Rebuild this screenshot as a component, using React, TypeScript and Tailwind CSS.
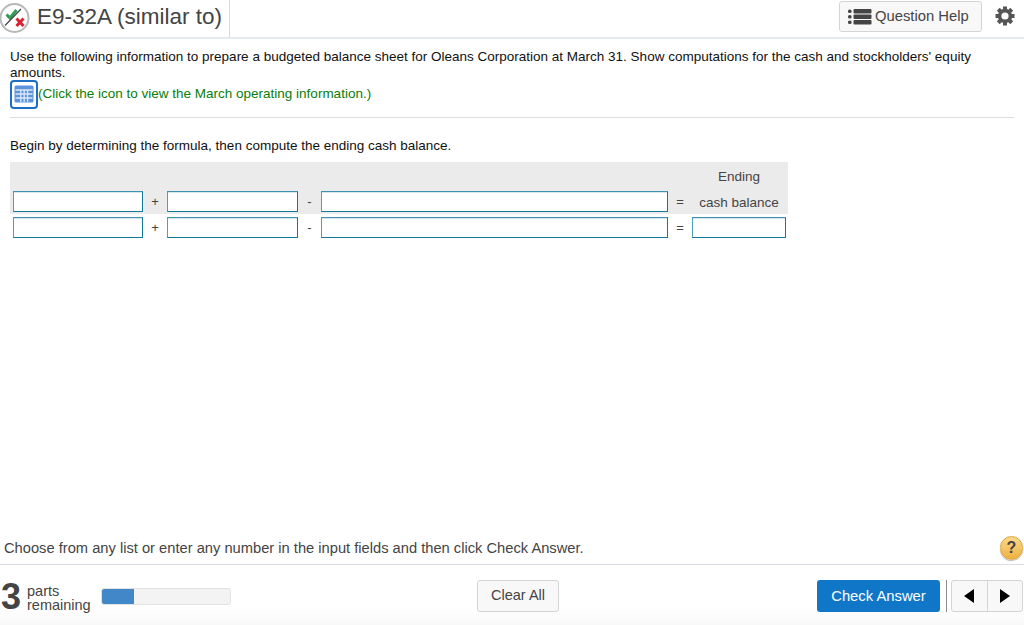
import React from 'react';

const Field = ({ className = '' }: { className?: string }) => (
  <div className={`h-[21px] bg-white border border-[#12799b] border-l-[#4f9fb8] border-t-[#3f93ae] shadow-[inset_0_1px_0_#d5e8ee] ${className}`} />
);

const Op = ({ children }: { children: React.ReactNode }) => (
  <div className="text-[13px] text-[#444] text-center leading-[21px]">{children}</div>
);

const StatusIcon = () => (
  <svg width="32" height="32" viewBox="0 0 32 32">
    <circle cx="15.5" cy="16" r="14" fill="#fff" stroke="#b8b8b8" strokeWidth="2" />
    <path d="M7.5 12.5l3.5 3.5 6.5-8" fill="none" stroke="#2f9e50" strokeWidth="3" />
    <path d="M6 23.5L22 7" stroke="#444" strokeWidth="1.2" />
    <path d="M17.5 16.5l7 7.5M24.5 16.5l-7 7.5" stroke="#d9232e" strokeWidth="3" />
  </svg>
);

const ListIcon = () => (
  <svg width="24" height="16" viewBox="0 0 24 16" fill="#444">
    <rect x="0" y="0.5" width="3.6" height="3.6" rx="1.6" />
    <rect x="0" y="6" width="3.6" height="3.6" rx="1.6" />
    <rect x="0" y="11.5" width="3.6" height="3.6" rx="1.6" />
    <rect x="5.5" y="0" width="18" height="4.6" rx="1" />
    <rect x="5.5" y="5.5" width="18" height="4.6" rx="1" />
    <rect x="5.5" y="11" width="18" height="4.6" rx="1" />
  </svg>
);

const GearIcon = () => (
  <svg width="20" height="20" viewBox="0 0 20 20">
    <g fill="#555">
      <circle cx="10" cy="10" r="7.2" />
      <rect x="8" y="0.5" width="4" height="19" />
      <rect x="8" y="0.5" width="4" height="19" transform="rotate(45 10 10)" />
      <rect x="8" y="0.5" width="4" height="19" transform="rotate(90 10 10)" />
      <rect x="8" y="0.5" width="4" height="19" transform="rotate(135 10 10)" />
    </g>
    <circle cx="10" cy="10" r="3.6" fill="#fff" />
  </svg>
);

const TableIcon = () => (
  <div className="w-[28px] h-[29px] border-[2px] border-[#1c6fc4] rounded-[4px] bg-white flex items-center justify-center">
    <svg width="20" height="18" viewBox="0 0 20 18">
      <rect x="0.5" y="0.5" width="19" height="17" rx="1.5" fill="#5b93dc" />
      <path d="M1.5 5h17M1.5 9h17M1.5 13h17M6.8 5v12M10.2 5v12M13.6 5v12" stroke="#dbe8f8" strokeWidth="1.3" />
    </svg>
  </div>
);

export default function App() {
  return (
    <div className="w-[1024px] h-[625px] flex flex-col bg-white overflow-hidden font-['Liberation_Sans',Arial,sans-serif] text-[#111]">
      {/* header */}
      <div className="h-[39px] shrink-0 flex items-stretch border-b-2 border-[#e6eaee]">
        <div className="w-[230px] flex items-center border-r border-[#d5dae0]">
          <div className="ml-[-1px] mr-[6px] mt-[-2px]"><StatusIcon /></div>
          <span className="text-[22.5px] text-[#444] leading-none mt-[-3px] whitespace-nowrap">E9-32A (similar to)</span>
        </div>
        <div className="ml-auto flex items-start pt-[1px]">
          <button className="w-[143px] h-[31px] mr-[13px] pl-[8px] flex items-center gap-[3px] rounded-[3px] border border-[#d4d4d4] bg-[#f8f8f8] text-[14.8px] text-[#444]">
            <ListIcon />
            <span>Question Help</span>
          </button>
          <div className="mr-[9px] mt-[5px]"><GearIcon /></div>
        </div>
      </div>

      {/* question */}
      <div className="mx-[10px] mt-[10px] pb-[8px] border-b border-[#dcdcdc] text-[13.5px] leading-[16px]">
        <p className="whitespace-nowrap">Use the following information to prepare a budgeted balance sheet for Oleans Corporation at March 31. Show computations for the cash and stockholders' equity</p>
        <p>amounts.</p>
        <div className="flex items-center h-[30px] text-[#0a7d0a] mt-[-2px]">
          <TableIcon />
          <span>(Click the icon to view the March operating information.)</span>
        </div>
      </div>

      <p className="ml-[10px] mt-[19px] text-[13.5px] leading-[17px]">Begin by determining the formula, then compute the ending cash balance.</p>

      {/* formula table */}
      <div className="ml-[10px] mt-[8px] w-[778px] text-[13.5px] text-[#444]">
        <div className="bg-[#ebebeb] h-[52px] px-[3px] grid grid-cols-[130px_24px_131px_23px_347px_24px_94px] grid-rows-[29px_21px]">
          <div className="col-start-7 text-center leading-[29px]">Ending</div>
          <Field className="row-start-2 col-start-1" />
          <Op>+</Op>
          <Field />
          <Op>-</Op>
          <Field />
          <Op>=</Op>
          <div className="text-center leading-[24px] whitespace-nowrap">cash balance</div>
        </div>
        <div className="mt-[3px] px-[3px] grid grid-cols-[130px_24px_131px_23px_347px_24px_94px]">
          <Field />
          <Op>+</Op>
          <Field />
          <Op>-</Op>
          <Field />
          <Op>=</Op>
          <Field />
        </div>
      </div>

      {/* hint line */}
      <div className="mt-auto h-[32px] flex items-center justify-between border-b border-[#dcdfe6] pl-[4px] pr-[1px]">
        <span className="text-[14.7px] text-[#444]">Choose from any list or enter any number in the input fields and then click Check Answer.</span>
        <div className="w-[23px] h-[24px] mb-[1px] rounded-full bg-gradient-to-b from-[#fcd98a] to-[#eeb03c] border border-[#d9a441] shadow-[0_1px_1px_#bbb] flex items-center justify-center text-[16px] font-bold text-[#444]">?</div>
      </div>

      {/* footer */}
      <div className="h-[60px] shrink-0 flex items-start bg-gradient-to-b from-white from-70% to-[#f8f8f8] pt-[15px]">
        <div className="w-[477px] flex items-center">
          <span className="w-[27px] pl-[1px] text-[36px] font-bold text-[#444] leading-none mt-[-1px]">3</span>
          <div className="text-[14.5px] leading-[14px] text-[#444] w-[75px]">
            <div>parts</div>
            <div>remaining</div>
          </div>
          <div className="w-[130px] h-[17px] mt-[-2px] ml-[-1px] rounded-[3px] bg-[#f3f3f3] border border-[#e2e2e2] overflow-hidden">
            <div className="h-full w-[25%] bg-[#4288c8]" />
          </div>
        </div>
        <button className="w-[82px] h-[32px] rounded-[3px] border border-[#d4d4d4] bg-[#f8f8f8] text-[14.5px] text-[#444]">Clear All</button>
        <button className="ml-[258px] w-[123px] h-[32px] rounded-[3px] bg-[#1077c8] text-[14.8px] text-white">Check Answer</button>
        <div className="ml-[6px] w-px h-[32px] bg-[#8a8a8a]" />
        <div className="ml-[4px] w-[72px] h-[32px] flex rounded-[3px] border border-[#d4d4d4] bg-[#f8f8f8]">
          <div className="flex-1 flex items-center justify-center border-r border-[#d4d4d4]">
            <svg width="10" height="14" viewBox="0 0 10 14"><path d="M10 0v14L0 7z" fill="#000" /></svg>
          </div>
          <div className="flex-1 flex items-center justify-center">
            <svg width="10" height="14" viewBox="0 0 10 14"><path d="M0 0v14l10-7z" fill="#000" /></svg>
          </div>
        </div>
      </div>
    </div>
  );
}
